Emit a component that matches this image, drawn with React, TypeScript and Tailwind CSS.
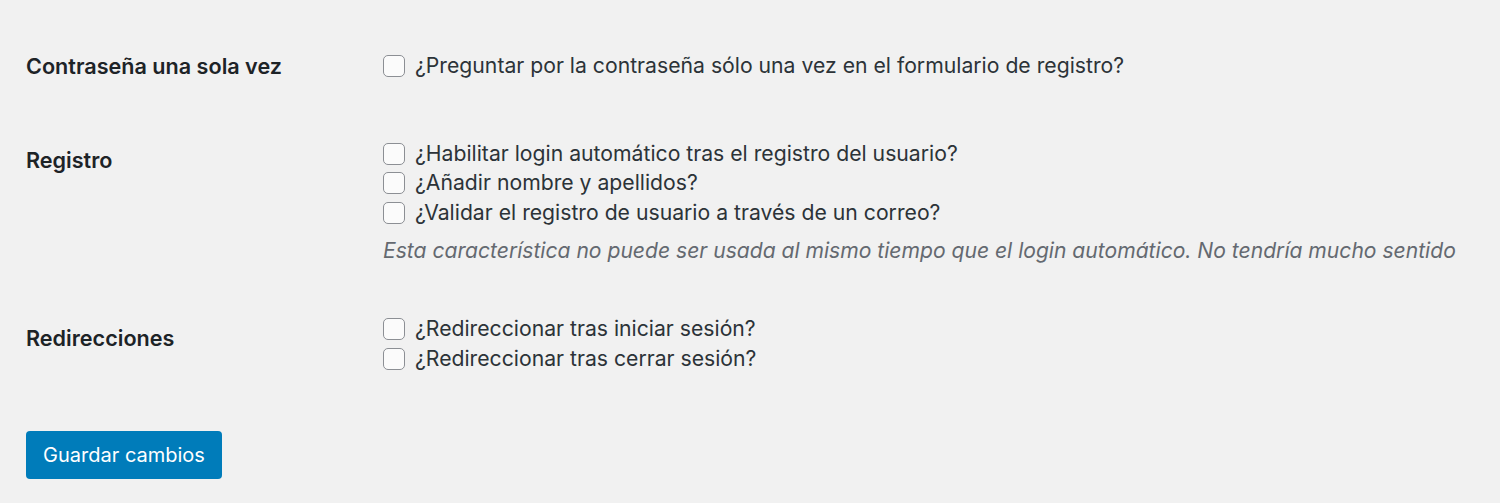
import React from "react";

const Box = () => (
  <span className="inline-block w-[22px] h-[22px] rounded-[5px] border-[1.5px] border-[#8c8f94] bg-[#fbfbfb] shrink-0" />
);

const Line = ({ text }: { text: string }) => (
  <div className="flex items-center gap-[10px] h-[29.5px]">
    <Box />
    <span>{text}</span>
  </div>
);

export default function App() {
  return (
    <div
      className="w-[1500px] h-[503px] bg-[#f1f1f1] text-[#2c3338] text-[21.2px] overflow-hidden"
      style={{ fontFamily: "Inter, 'Liberation Sans', sans-serif" }}
    >
      <div className="pl-[26px] pt-[51px] flex flex-col">
        {/* Row 1 */}
        <div className="flex">
          <div className="w-[357px] shrink-0 h-[30px] leading-[30px] text-[21.6px] font-semibold text-[#1d2327]">
            Contraseña una sola vez
          </div>
          <div className="flex flex-col">
            <Line text="¿Preguntar por la contraseña sólo una vez en el formulario de registro?" />
          </div>
        </div>

        {/* Row 2 */}
        <div className="flex mt-[58px]">
          <div className="w-[357px] shrink-0 pt-[6px] h-[30px] leading-[30px] text-[21.6px] font-semibold text-[#1d2327]">
            Registro
          </div>
          <div className="flex flex-col">
            <Line text="¿Habilitar login automático tras el registro del usuario?" />
            <Line text="¿Añadir nombre y apellidos?" />
            <Line text="¿Validar el registro de usuario a través de un correo?" />
            <p className="mt-[8px] leading-[30px] italic text-[21.1px] text-[#646970] whitespace-nowrap">
              Esta característica no puede ser usada al mismo tiempo que el login automático. No tendría mucho sentido
            </p>
          </div>
        </div>

        {/* Row 3 */}
        <div className="flex mt-[49px]">
          <div className="w-[357px] shrink-0 pt-[8px] h-[30px] leading-[30px] text-[21.6px] font-semibold text-[#1d2327]">
            Redirecciones
          </div>
          <div className="flex flex-col">
            <Line text="¿Redireccionar tras iniciar sesión?" />
            <Line text="¿Redireccionar tras cerrar sesión?" />
          </div>
        </div>

        <div className="mt-[57px]">
          <button className="h-[48px] w-[196px] rounded-[4px] bg-[#007cba] text-white text-[20px] leading-[48px]">
            Guardar cambios
          </button>
        </div>
      </div>
    </div>
  );
}
